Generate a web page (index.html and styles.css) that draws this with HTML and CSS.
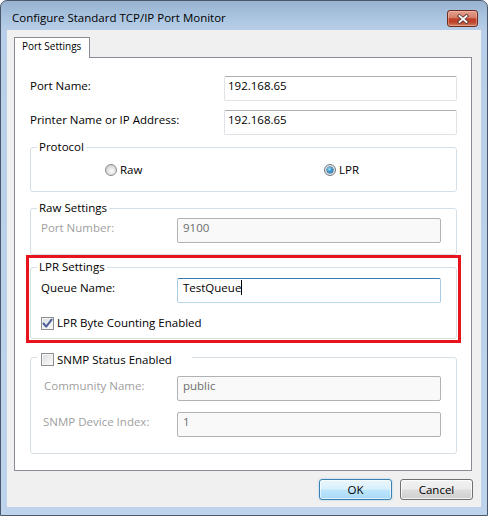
FILE: index.html
```html
<!DOCTYPE html>
<html lang="en">
<head>
<meta charset="utf-8">
<title>Configure Standard TCP/IP Port Monitor</title>
<link rel="stylesheet" href="styles.css">
</head>
<body>
<div class="window">
  <div class="titlebar">
    <span class="title">Configure Standard TCP/IP Port Monitor</span>
    <button class="close" type="button" aria-label="Close">
      <svg width="14" height="10" viewBox="0 0 14 10"><path class="x-out" d="M3.5 2 L10.5 8 M10.5 2 L3.5 8"/><path class="x-in" d="M3.5 2 L10.5 8 M10.5 2 L3.5 8"/></svg>
    </button>
  </div>
  <div class="client">
    <div class="tab">Port Settings</div>
    <div class="panel">
      <div class="row row-first">
        <span class="label">Port Name:</span>
        <div class="input input-top">192.168.65</div>
      </div>
      <div class="row">
        <span class="label">Printer Name or IP Address:</span>
        <div class="input input-top">192.168.65</div>
      </div>

      <fieldset class="group group-protocol">
        <legend>Protocol</legend>
        <div class="radios">
          <span class="radio"><span class="radio-dot"></span>Raw</span>
          <span class="radio"><span class="radio-dot on"><span class="radio-inner"></span></span>LPR</span>
        </div>
      </fieldset>

      <fieldset class="group group-raw">
        <legend>Raw Settings</legend>
        <div class="frow">
          <span class="label disabled">Port Number:</span>
          <div class="input input-field is-disabled">9100</div>
        </div>
      </fieldset>

      <div class="highlight">
        <fieldset class="group group-lpr">
          <legend>LPR Settings</legend>
          <div class="frow">
            <span class="label">Queue Name:</span>
            <div class="input input-field is-focused">TestQueue<span class="caret"></span></div>
          </div>
          <div class="check-row">
            <span class="checkbox"><svg width="11" height="11" viewBox="0 0 11 11"><path d="M1.5 5.5 L4.2 8.6 L9.6 1.6" class="tick"/></svg></span>
            <span>LPR Byte Counting Enabled</span>
          </div>
        </fieldset>
      </div>

      <fieldset class="group group-snmp">
        <legend class="legend-check"><span class="checkbox"></span><span class="legend-text">SNMP Status Enabled</span></legend>
        <div class="frow">
          <span class="label disabled label-snmp">Community Name:</span>
          <div class="input input-field is-disabled">public</div>
        </div>
        <div class="frow frow-next">
          <span class="label disabled label-snmp2">SNMP Device Index:</span>
          <div class="input input-field is-disabled">1</div>
        </div>
      </fieldset>
    </div>
    <div class="buttons">
      <button type="button" class="btn btn-default">OK</button>
      <button type="button" class="btn">Cancel</button>
    </div>
  </div>
</div>
</body>
</html>
```

FILE: styles.css
```css
* { box-sizing: border-box; }
html, body { margin: 0; padding: 0; }
body {
  width: 488px;
  height: 516px;
  overflow: hidden;
  background: #fff;
  font-family: "Open Sans", "Noto Sans", sans-serif;
  font-size: 11.5px;
  line-height: 15px;
  color: #000;
}

.window {
  width: 488px;
  height: 516px;
  border: 1px solid #4a5869;
  border-radius: 7px 7px 0 0;
  background: linear-gradient(180deg, #97b3d1 0, #aac4df 16px, #b8cfe9 30px, #bdd4ec 100%);
  display: flex;
  flex-direction: column;
}

.titlebar {
  flex: none;
  height: 29px;
  display: flex;
  justify-content: space-between;
  align-items: flex-start;
  padding: 0 9px 0 11px;
}
.title {
  margin-top: 9px;
  color: #000;
}
.close {
  margin-top: 9px;
  width: 31px;
  height: 17px;
  padding: 0;
  border: 1px solid #6a2e24;
  border-radius: 3px;
  background: linear-gradient(180deg, #e4a290 0, #d57c66 45%, #c0402a 52%, #bd4329 75%, #d3866a 100%);
  box-shadow: inset 0 0 0 1px rgba(255, 200, 180, 0.45);
  display: flex;
  align-items: center;
  justify-content: center;
}
.close svg { display: block; }
.x-out { stroke: #5b3a35; stroke-width: 3.6; stroke-linecap: square; fill: none; }
.x-in { stroke: #fff; stroke-width: 1.8; stroke-linecap: square; fill: none; }

.client {
  flex: none;
  margin: 0 6px;
  height: 477px;
  background: #f0f0f0;
  padding: 7px 9px 0 7px;
}

.tab {
  position: relative;
  z-index: 1;
  width: 76px;
  height: 21px;
  margin-bottom: -1px;
  border: 1px solid #898c95;
  border-bottom: 0;
  background: #fff;
  padding-left: 7px;
  font-size: 10px;
  line-height: 16px;
  white-space: nowrap;
}

.panel {
  height: 414px;
  border: 1px solid #898c95;
  background: #fff;
  padding: 18px 14px 0 15px;
}

.row {
  display: grid;
  grid-template-columns: 1fr 233px;
  align-items: start;
  height: 25px;
  margin-top: 9px;
}
.row-first { margin-top: 0; }

.label { padding-top: 2px; white-space: nowrap; }
.label.disabled { color: #a0a0a0; }
.label-snmp { padding-left: 3px; }
.label-snmp2 { padding-left: 2px; }

.input {
  height: 25px;
  border: 1px solid #dfe3e8;
  border-top-color: #abadb3;
  border-radius: 2px;
  background: #fff;
  padding: 1px 3px 0;
  white-space: nowrap;
}
.input-field { padding-left: 5px; }
.input.is-disabled {
  border-color: #b0b3b6;
  background: #f9f9f9;
  color: #6d6d6d;
}
.input.is-focused {
  border-color: #a9cde6;
  border-top-color: #3d7bad;
  border-bottom-color: #b7d9ed;
}
.caret {
  display: inline-block;
  width: 1px;
  height: 15px;
  background: #000;
  vertical-align: top;
}

.group {
  margin: 0;
  min-width: 0;
  border: 1px solid #d5dfe5;
  border-radius: 3px;
  padding: 0 15px 0 10px;
}
.group legend {
  margin-left: -4px;
  padding: 0 2px;
  line-height: 16px;
  height: 16px;
}

.group-protocol { margin-top: 4px; padding-top: 7px; padding-bottom: 13px; }
.group-raw { margin-top: 8px; padding-top: 2px; padding-bottom: 11px; }
.group-lpr { padding-top: 3px; padding-bottom: 7px; }
.group-snmp { margin-top: 10px; padding-top: 11px; padding-bottom: 16px; }

.highlight {
  position: relative;
  margin-top: 4px;
}
.highlight::after {
  content: "";
  position: absolute;
  left: -4px;
  right: -4px;
  top: -4px;
  bottom: -4px;
  border: 3px solid #e8141d;
  pointer-events: none;
}

.radios {
  display: grid;
  grid-template-columns: 219px auto;
  padding-left: 64px;
  height: 16px;
  line-height: 16px;
}
.radio {
  display: flex;
  align-items: center;
  gap: 3px;
}
.radio-dot {
  width: 12px;
  height: 12px;
  border-radius: 50%;
  border: 1px solid #8b8c8e;
  background: radial-gradient(circle at 55% 60%, #fbfbfb 0, #e4e4e4 45%, #b9b9b9 100%);
  display: flex;
  align-items: center;
  justify-content: center;
}
.radio-dot.on {
  border-color: #6f7b86;
  background: radial-gradient(circle, #f4f4f4 0, #dadada 100%);
}
.radio-inner {
  width: 6px;
  height: 6px;
  border-radius: 50%;
  background: radial-gradient(circle at 40% 35%, #a4e2ff 0, #3b9ad6 45%, #17578c 100%);
  box-shadow: 0 0 0 0.5px #1f4a6e;
}

.frow {
  display: grid;
  grid-template-columns: 1fr 264px;
  align-items: start;
  height: 25px;
}
.frow-next { margin-top: 11px; }

.check-row {
  display: flex;
  align-items: center;
  gap: 3px;
  margin-top: 12px;
  height: 16px;
  line-height: 16px;
}
.checkbox {
  flex: none;
  width: 13px;
  height: 13px;
  border: 1px solid #8e8f8f;
  background: linear-gradient(135deg, #d8dbe0 0, #eef0f2 60%, #fbfbfb 100%);
  box-shadow: inset 0 0 0 1px #f4f4f4;
  display: flex;
  align-items: center;
  justify-content: center;
}
.checkbox svg { display: block; }
.tick { fill: none; stroke: #4d5f9a; stroke-width: 2; stroke-linecap: round; stroke-linejoin: round; }

.legend-check {
  display: flex;
  align-items: center;
  gap: 3px;
  padding: 0 20px 0 4px !important;
}
.legend-check > * { margin-top: 5px; }

.buttons {
  display: flex;
  justify-content: flex-end;
  gap: 8px;
  margin-top: 8px;
  margin-right: -1px;
}
.btn {
  width: 73px;
  height: 21px;
  padding: 0;
  font: inherit;
  line-height: 17px;
  color: #000;
  border: 1px solid #707070;
  border-radius: 3px;
  background: linear-gradient(180deg, #f2f2f2 0, #ebebeb 48%, #dddddd 52%, #cfcfcf 100%);
  box-shadow: inset 0 0 0 1px rgba(255, 255, 255, 0.75);
}
.btn-default {
  border-color: #3c7fb1;
  background: linear-gradient(180deg, #eaf6fd 0, #d9f0fc 48%, #bee6fd 52%, #a7d9f5 100%);
  box-shadow: inset 0 0 0 1px rgba(255, 255, 255, 0.6), 0 0 2px rgba(80, 170, 230, 0.6);
}
```
